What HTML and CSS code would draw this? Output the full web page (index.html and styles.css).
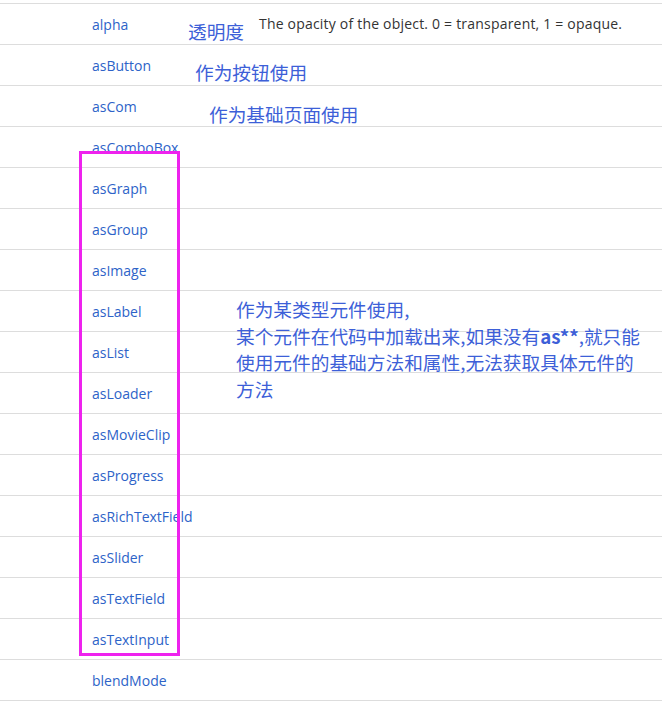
FILE: index.html
```html
<!DOCTYPE html>
<html lang="zh">
<head>
<meta charset="utf-8">
<title>GObject</title>
<link rel="stylesheet" href="styles.css">
</head>
<body>
<div class="page">
  <div class="list">
    <div class="row"><span class="name">alpha</span><span class="desc">The opacity of the object. 0 = transparent, 1 = opaque.</span></div>
    <div class="row"><span class="name">asButton</span></div>
    <div class="row"><span class="name">asCom</span></div>
    <div class="row"><span class="name">asComboBox</span></div>
    <div class="row"><span class="name">asGraph</span></div>
    <div class="row"><span class="name">asGroup</span></div>
    <div class="row"><span class="name">asImage</span></div>
    <div class="row"><span class="name">asLabel</span></div>
    <div class="row"><span class="name">asList</span></div>
    <div class="row"><span class="name">asLoader</span></div>
    <div class="row"><span class="name">asMovieClip</span></div>
    <div class="row"><span class="name">asProgress</span></div>
    <div class="row"><span class="name">asRichTextField</span></div>
    <div class="row"><span class="name">asSlider</span></div>
    <div class="row"><span class="name">asTextField</span></div>
    <div class="row"><span class="name">asTextInput</span></div>
    <div class="row"><span class="name">blendMode</span></div>
  </div>
  <div class="note note-alpha">透明度</div>
  <div class="note note-button">作为按钮使用</div>
  <div class="note note-com">作为基础页面使用</div>
  <div class="note note-as">作为某类型元件使用,<br>某个元件在代码中加载出来,如果没有<b>as**</b>,就只能<br>使用元件的基础方法和属性,无法获取具体元件的<br>方法</div>
  <div class="highlight"></div>
</div>
</body>
</html>
```

FILE: styles.css
```css
html, body {
  margin: 0;
  padding: 0;
  background: #ffffff;
}

.page {
  position: relative;
  width: 662px;
  height: 711px;
  overflow: hidden;
  font-family: "Open Sans", "Noto Sans", "Noto Sans CJK SC", sans-serif;
}

.list {
  padding-top: 3px;
}

.row {
  display: grid;
  grid-template-columns: 92px 167px 1fr;
  height: 40px;
  border-top: 1px solid #dddddd;
  align-items: center;
}

.row:last-child {
  border-bottom: 1px solid #dddddd;
}

.name {
  grid-column: 2;
  font-size: 14px;
  color: #2d63c8;
  white-space: nowrap;
}

.desc {
  grid-column: 3;
  font-size: 14px;
  letter-spacing: 0.2px;
  color: #333333;
  white-space: nowrap;
  margin-top: -2px;
}

.note {
  position: absolute;
  font-family: "Noto Sans CJK SC", sans-serif;
  font-size: 18.7px;
  line-height: 26.5px;
  color: #3d5fd8;
  white-space: nowrap;
}

.note b {
  font-weight: 700;
}

.note-alpha { left: 188px; top: 18px; }
.note-button { left: 195px; top: 59px; }
.note-com { left: 209px; top: 101px; }
.note-as { left: 236px; top: 296px; }

.highlight {
  position: absolute;
  left: 79px;
  top: 151px;
  width: 95px;
  height: 499px;
  border: 3px solid #ee22ee;
}
```
